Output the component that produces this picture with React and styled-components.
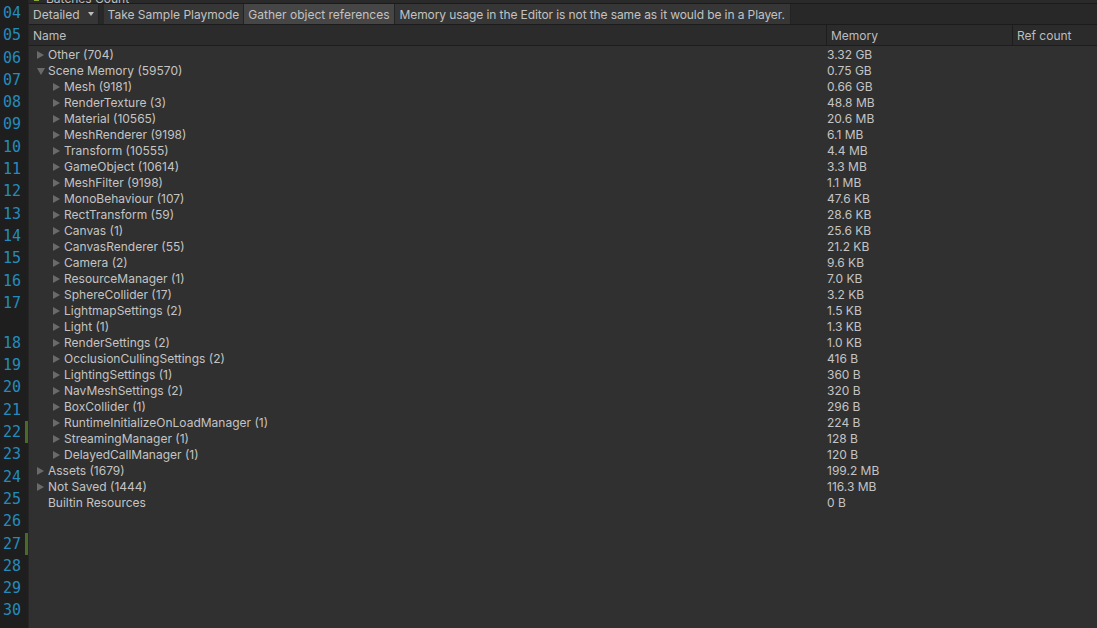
import React from "react";
import styled, { createGlobalStyle } from "styled-components";

const Global = createGlobalStyle`
  html, body { margin: 0; padding: 0; background: #1e1e1e; }
  body { width: 1097px; height: 628px; overflow: hidden; }
  #root { height: 628px; }
`;

const Page = styled.div`
  display: flex;
  height: 628px;
  width: 1097px;
  overflow: hidden;
  font-family: Inter, "Noto Sans", sans-serif;
  font-size: 12px;
  color: #c4c4c4;
`;

const Gutter = styled.div`
  width: 28px;
  flex: none;
  background: #1e1e1e;
  padding-top: 2px;
  display: flex;
  flex-direction: column;
  border-right: 1px solid #252525;
`;

const GutterLine = styled.div`
  height: ${(p) => (p.$tall ? "40px" : "22.3px")};
  display: flex;
  justify-content: space-between;
  align-items: flex-start;
  flex: none;
`;

const LineNo = styled.span`
  font-family: "DejaVu Sans Mono", "Liberation Mono", monospace;
  font-size: 15px;
  line-height: 22.3px;
  color: #258bbd;
  padding-left: 3px;
`;

const ChangeMark = styled.span`
  width: 3px;
  height: 22.3px;
  background: ${(p) => (p.$on ? "#4b6a2a" : "transparent")};
`;

const Panel = styled.div`
  flex: 1;
  display: flex;
  flex-direction: column;
  background: #303030;
  min-width: 0;
`;

const Strip = styled.div`
  height: 3px;
  overflow: hidden;
  background: #2a2a2a;
  border-bottom: 1px solid #1b1b1b;
  display: flex;
`;

const StripInner = styled.div`
  margin-top: -10px;
  height: 16px;
  display: flex;
  align-items: center;
  gap: 7px;
  padding-left: 5px;
  color: #bdbdbd;
`;

const Swatch = styled.span`
  width: 5px;
  height: 6px;
  background: #8fa83a;
`;

const Toolbar = styled.div`
  height: 20px;
  display: flex;
  background: #282828;
  border-bottom: 1px solid #1b1b1b;
`;

const ToolButton = styled.div`
  display: flex;
  align-items: center;
  padding: 0 ${(p) => (p.$pad || 4)}px;
  background: ${(p) => (p.$active ? "#464646" : "#363636")};
  border-right: 1px solid #232323;
  margin-right: ${(p) => (p.$gap ? 5 : 0)}px;
  color: #c2c2c2;
  white-space: nowrap;
  gap: 8px;
  letter-spacing: ${(p) => (p.$tight ? "-0.1px" : "0")};
`;

const Caret = styled.span`
  width: 0;
  height: 0;
  border-left: 3.5px solid transparent;
  border-right: 3.5px solid transparent;
  border-top: 4px solid #bdbdbd;
`;

const Header = styled.div`
  height: 20px;
  display: grid;
  grid-template-columns: 797px 186px 1fr;
  background: #2b2b2b;
  border-bottom: 1px solid #1d1d1d;
`;

const HeaderCell = styled.div`
  display: flex;
  align-items: center;
  padding-left: 4px;
  color: #bdbdbd;
  border-left: ${(p) => (p.$sep ? "1px solid #1d1d1d" : "none")};
`;

const Body = styled.div`
  flex: 1;
  display: flex;
  flex-direction: column;
  padding-top: 1px;
`;

const Row = styled.div`
  height: 16px;
  display: grid;
  grid-template-columns: 797px 186px 1fr;
  align-items: center;
  line-height: 16px;
`;

const NameCell = styled.div`
  display: flex;
  align-items: center;
  white-space: nowrap;
`;

const ArrowBox = styled.span`
  width: 11px;
  height: 16px;
  display: flex;
  align-items: center;
  flex: none;
`;

const ArrowRight = styled.span`
  width: 0;
  height: 0;
  border-top: 4.5px solid transparent;
  border-bottom: 4.5px solid transparent;
  border-left: 7px solid #6a6a6a;
`;

const ArrowDown = styled.span`
  width: 0;
  height: 0;
  border-left: 4.5px solid transparent;
  border-right: 4.5px solid transparent;
  border-top: 7px solid #6a6a6a;
`;

const MemCell = styled.div`
  padding-left: 1px;
  white-space: nowrap;
`;

const rows = [
  [0, "r", "Other (704)", "3.32 GB"],
  [0, "d", "Scene Memory (59570)", "0.75 GB"],
  [1, "r", "Mesh (9181)", "0.66 GB"],
  [1, "r", "RenderTexture (3)", "48.8 MB"],
  [1, "r", "Material (10565)", "20.6 MB"],
  [1, "r", "MeshRenderer (9198)", "6.1 MB"],
  [1, "r", "Transform (10555)", "4.4 MB"],
  [1, "r", "GameObject (10614)", "3.3 MB"],
  [1, "r", "MeshFilter (9198)", "1.1 MB"],
  [1, "r", "MonoBehaviour (107)", "47.6 KB"],
  [1, "r", "RectTransform (59)", "28.6 KB"],
  [1, "r", "Canvas (1)", "25.6 KB"],
  [1, "r", "CanvasRenderer (55)", "21.2 KB"],
  [1, "r", "Camera (2)", "9.6 KB"],
  [1, "r", "ResourceManager (1)", "7.0 KB"],
  [1, "r", "SphereCollider (17)", "3.2 KB"],
  [1, "r", "LightmapSettings (2)", "1.5 KB"],
  [1, "r", "Light (1)", "1.3 KB"],
  [1, "r", "RenderSettings (2)", "1.0 KB"],
  [1, "r", "OcclusionCullingSettings (2)", "416 B"],
  [1, "r", "LightingSettings (1)", "360 B"],
  [1, "r", "NavMeshSettings (2)", "320 B"],
  [1, "r", "BoxCollider (1)", "296 B"],
  [1, "r", "RuntimeInitializeOnLoadManager (1)", "224 B"],
  [1, "r", "StreamingManager (1)", "128 B"],
  [1, "r", "DelayedCallManager (1)", "120 B"],
  [0, "r", "Assets (1679)", "199.2 MB"],
  [0, "r", "Not Saved (1444)", "116.3 MB"],
  [0, "", "Builtin Resources", "0 B"],
];

const lines = [];
for (let i = 4; i <= 30; i++) lines.push(i);

export default function App() {
  return (
    <>
      <Global />
      <Page>
        <Gutter>
          {lines.map((n) => (
            <GutterLine key={n} $tall={n === 17}>
              <LineNo>{String(n).padStart(2, "0")}</LineNo>
              <ChangeMark $on={n === 22 || n === 27} />
            </GutterLine>
          ))}
        </Gutter>
        <Panel>
          <Strip>
            <StripInner>
              <Swatch />
              <span>Batches Count</span>
            </StripInner>
          </Strip>
          <Toolbar>
            <ToolButton $gap>
              Detailed <Caret />
            </ToolButton>
            <ToolButton>Take Sample Playmode</ToolButton>
            <ToolButton $active>Gather object references</ToolButton>
            <ToolButton $pad={5} $tight>
              Memory usage in the Editor is not the same as it would be in a Player.
            </ToolButton>
          </Toolbar>
          <Header>
            <HeaderCell>Name</HeaderCell>
            <HeaderCell $sep>Memory</HeaderCell>
            <HeaderCell $sep>Ref count</HeaderCell>
          </Header>
          <Body>
            {rows.map(([depth, arrow, name, mem]) => (
              <Row key={name}>
                <NameCell style={{ paddingLeft: 8 + depth * 16 }}>
                  <ArrowBox>
                    {arrow === "r" && <ArrowRight />}
                    {arrow === "d" && <ArrowDown />}
                  </ArrowBox>
                  {name}
                </NameCell>
                <MemCell>{mem}</MemCell>
                <div />
              </Row>
            ))}
          </Body>
        </Panel>
      </Page>
    </>
  );
}
